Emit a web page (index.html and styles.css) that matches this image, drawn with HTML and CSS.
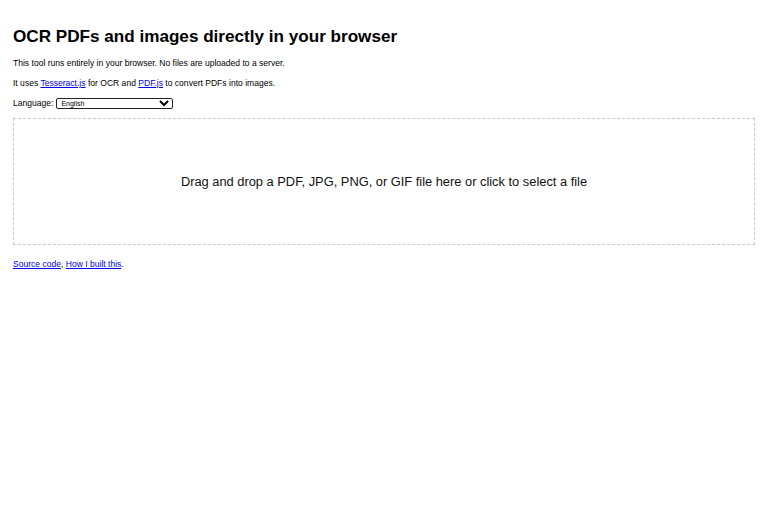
FILE: index.html
```html
<!DOCTYPE html>
<html lang="en">
<head>
<meta charset="utf-8">
<title>OCR PDFs and images directly in your browser</title>
<link rel="stylesheet" href="styles.css">
</head>
<body>
<main class="page">
  <h1 class="title">OCR PDFs and images directly in your browser</h1>
  <p class="line">This tool runs entirely in your browser. No files are uploaded to a server.</p>
  <p class="line">It uses <a href="#">Tesseract.js</a> for OCR and <a href="#">PDF.js</a> to convert PDFs into images.</p>
  <p class="line lang-row">
    <label for="language">Language:</label>
    <select id="language" class="lang-select">
      <option>English</option>
    </select>
  </p>
  <div class="dropzone">Drag and drop a PDF, JPG, PNG, or GIF file here or click to select a file</div>
  <p class="line footer-links"><a href="#">Source code</a>, <a href="#">How I built this</a>.</p>
</main>
</body>
</html>
```

FILE: styles.css
```css
html, body {
  margin: 0;
  padding: 0;
  background: #fff;
}

body {
  font-family: "Liberation Sans", Arial, sans-serif;
  color: #000;
}

.page {
  padding: 0 13px;
}

.title {
  font-size: 17.12px;
  line-height: 22px;
  font-weight: bold;
  margin: 26px 0 9.9px;
}

.line {
  font-size: 8.56px;
  line-height: 11px;
  margin: 0 0 9px;
}

.line a {
  color: #0000ee;
}

.lang-row {
  display: flex;
  align-items: center;
  gap: 3px;
  height: 11px;
}

.lang-select {
  width: 117px;
  height: 11px;
  font-family: "Liberation Sans", Arial, sans-serif;
  font-size: 7px;
  padding: 0;
  border: 1px solid #222;
  border-radius: 2px;
  background: #fff;
  color: #000;
  box-sizing: border-box;
}

.dropzone {
  border: 1.2px dashed #c8c8c8;
  height: 127px;
  box-sizing: border-box;
  display: flex;
  align-items: center;
  justify-content: center;
  font-size: 12.85px;
  color: #111;
  margin-bottom: 14px;
}

.footer-links {
  margin: 0;
}
```
